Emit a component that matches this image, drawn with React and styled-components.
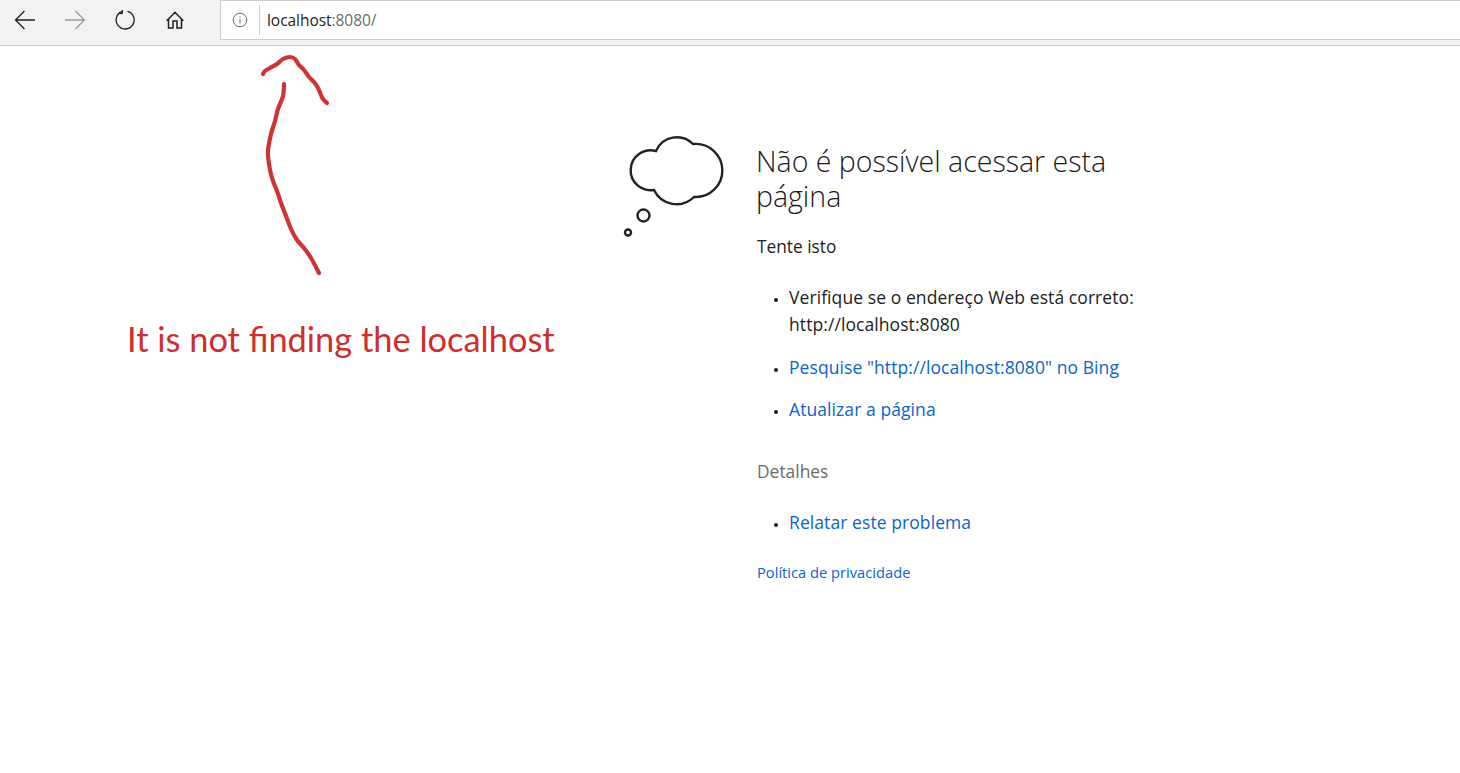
import React from "react";
import styled, { createGlobalStyle } from "styled-components";

const Global = createGlobalStyle`
  html, body { margin: 0; padding: 0; background: #fff; }
  body { font-family: "Open Sans", "Noto Sans", sans-serif; overflow: hidden; }
`;
const Page = styled.div`width: 1460px; height: 773px; display: flex; flex-direction: column; overflow: hidden;`;
const Toolbar = styled.header`
  height: 45px; flex: none; display: flex; align-items: flex-start;
  background: #f2f2f2; border-bottom: 1px solid #cfcfcf;
`;
const NavGroup = styled.nav`display: flex; width: 220px; flex: none;`;
const NavButton = styled.button`
  width: 50px; height: 40px; padding: 0; border: 0; background: none; display: flex; align-items: center; justify-content: center;
  color: ${p => (p.$disabled ? "#9a9a9a" : "#1f1f1f")};
`;
const AddressBar = styled.div`
  flex: 1; height: 38px; background: #fff; border: 1px solid #cdcdcd; border-right: 0;
  display: flex; align-items: center;
`;
const InfoIcon = styled.span`width: 38px; flex: none; display: flex; justify-content: center; color: #6f6f6f;`;
const Divider = styled.span`width: 1px; height: 30px; background: #cdcdcd; flex: none;`;
const Url = styled.span`margin-left: 7px; font-size: 15.5px; letter-spacing: -0.05px; color: #1d1d1d;`;
const UrlRest = styled.span`color: #6b6b6b;`;
const Main = styled.main`flex: 1; display: flex;`;
const Annotation = styled.section`width: 620px; flex: none; display: flex; flex-direction: column;`;
const ArrowSvg = styled.svg`display: block; width: 90px; height: 235px; margin-left: 250px; filter: blur(0.4px);`;
const Note = styled.p`
  margin: 35px 0 0 127px; font-family: "Lato", "Open Sans", sans-serif; font-size: 34.4px; line-height: 46px; color: #cf2e2e; white-space: nowrap;
`;
const ErrorPanel = styled.section`display: flex; padding-top: 79px;`;
const CloudSvg = styled.svg`display: block; width: 130px; height: 120px; margin-left: -10px; flex: none;`;
const Content = styled.div`margin-left: 17px; width: 400px; padding-top: 19px; color: #1d1d1d;`;
const Title = styled.h1`margin: 0 0 0 -1px; font-size: 28.5px; line-height: 35px; font-weight: 300; color: #1a1a1a;`;
const Subtitle = styled.p`margin: 19px 0 0; font-size: 17.3px; line-height: 27px;`;
const List = styled.ul`margin: 24px 0 0; padding: 0 0 0 32px; list-style: disc; font-size: 17.5px; line-height: 27px; letter-spacing: 0.08px;`;
const Item = styled.li`
  margin-bottom: 15px;
  &:first-child:not(:last-child) { margin-bottom: 16px; }
  &:last-child { margin-bottom: 0; }
  &::marker { font-size: 12px; }
`;
const Link = styled.a`color: #0b63ce; text-decoration: none;`;
const Details = styled.p`margin: 35px 0 0; font-size: 17.4px; line-height: 27px; color: #6a6a6a;`;
const Policy = styled.a`display: block; margin-top: 26px; font-size: 14.7px; line-height: 20px; color: #0b63ce;`;

const smooth = pts => {
  let d = `M${pts[0][0]} ${pts[0][1]}`;
  for (let i = 0; i < pts.length - 1; i++) {
    const p0 = pts[i - 1] || pts[i], p1 = pts[i], p2 = pts[i + 1], p3 = pts[i + 2] || p2;
    d += `C${p1[0] + (p2[0] - p0[0]) / 6} ${p1[1] + (p2[1] - p0[1]) / 6} ${p2[0] - (p3[0] - p1[0]) / 6} ${p2[1] - (p3[1] - p1[1]) / 6} ${p2[0]} ${p2[1]}`;
  }
  return d;
};
const arrowHead = [[263, 73], [265, 70], [270, 67], [277, 63], [283, 58], [290, 56], [295, 58], [299, 64], [304, 69], [309, 76], [314, 81], [318, 87], [321, 94], [323, 98], [327, 102]];
const arrowShaft = [[284, 83], [283, 95], [278, 108], [275, 120], [271, 133], [268, 150], [269, 163], [272, 177], [277, 190], [281, 202], [286, 215], [291, 228], [297, 239], [304, 247], [311, 257], [319, 272]];

export default function App() {
  return (
    <Page>
      <Global />
      <Toolbar>
        <NavGroup>
          <NavButton aria-label="Voltar">
            <svg width="22" height="20" viewBox="0 0 22 20" fill="none" stroke="currentColor" strokeWidth="1.3"><path d="M1.5 10H21M10.5 1L1.5 10l9 9" /></svg>
          </NavButton>
          <NavButton $disabled aria-label="Avançar">
            <svg width="22" height="20" viewBox="0 0 22 20" fill="none" stroke="currentColor" strokeWidth="1.3"><path d="M20.5 10H1M11.5 1l9 9-9 9" /></svg>
          </NavButton>
          <NavButton aria-label="Atualizar">
            <svg width="20" height="20" viewBox="0 0 20 20" fill="none" stroke="currentColor" strokeWidth="1.3"><path d="M12.5 1.3A9 9 0 1 1 6.9 1.6M7.5 0L7.1 3.6 3.6 3" /></svg>
          </NavButton>
          <NavButton aria-label="Início">
            <svg width="20" height="20" viewBox="0 0 20 20" fill="none" stroke="currentColor" strokeWidth="1.5"><path d="M1.7 10.7L10 2.3l8.3 8.4M3.5 9v9h4.5v-7h4v7h4.5V9" /></svg>
          </NavButton>
        </NavGroup>
        <AddressBar>
          <InfoIcon>
            <svg width="16" height="16" viewBox="0 0 16 16" fill="none" stroke="currentColor"><circle cx="8" cy="8" r="6.8" /><path d="M8 7v4.6M8 4.2v1.4" /></svg>
          </InfoIcon>
          <Divider />
          <Url>localhost<UrlRest>:8080/</UrlRest></Url>
        </AddressBar>
      </Toolbar>
      <Main>
        <Annotation>
          <ArrowSvg viewBox="250 45 90 235" fill="none" stroke="#cf3434" strokeWidth="4.2" strokeLinecap="round" strokeLinejoin="round">
            <path d={smooth(arrowHead)} />
            <path d={smooth(arrowShaft)} />
          </ArrowSvg>
          <Note>It is not finding the localhost</Note>
        </Annotation>
        <ErrorPanel>
          <CloudSvg viewBox="610 125 130 120" fill="none" stroke="#222" strokeWidth="2.4">
            <path d="M656 151A22.7 22.7 0 0 1 693 144A26.6 26.6 0 1 1 694 197A24.9 24.9 0 0 1 654 190A20 20 0 1 1 656 151Z" />
            <circle cx="643.5" cy="215.5" r="6" />
            <circle cx="628" cy="232.5" r="3" />
          </CloudSvg>
          <Content>
            <Title>Não é possível acessar esta página</Title>
            <Subtitle>Tente isto</Subtitle>
            <List>
              <Item>Verifique se o endereço Web está correto:<br />http://localhost:8080</Item>
              <Item><Link>Pesquise "http://localhost:8080" no Bing</Link></Item>
              <Item><Link>Atualizar a página</Link></Item>
            </List>
            <Details>Detalhes</Details>
            <List>
              <Item><Link>Relatar este problema</Link></Item>
            </List>
            <Policy>Política de privacidade</Policy>
          </Content>
        </ErrorPanel>
      </Main>
    </Page>
  );
}
